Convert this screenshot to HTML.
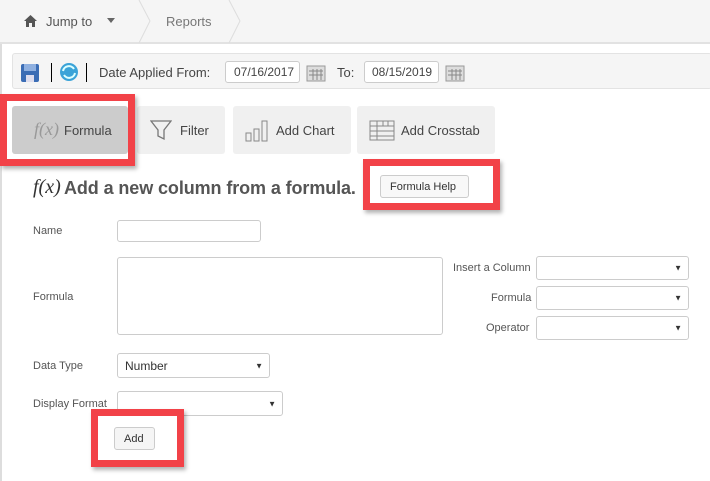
<!DOCTYPE html>
<html><head><style>
body{margin:0;width:710px;height:481px;background:#fff;font-family:"Liberation Sans",sans-serif;position:relative;overflow:hidden;color:#555}
.a{position:absolute}
.hdr{left:0;top:0;width:710px;height:42px;background:#f5f5f5;border-bottom:2px solid #e2e2e2}
.lbl{font-size:11px;color:#555}
.in{position:absolute;border:1px solid #ccc;border-radius:3px;background:#fff;box-sizing:border-box}
.sel::after{content:"▼";position:absolute;right:6px;top:50%;transform:translateY(-50%);font-size:8px;color:#333}
.btn{position:absolute;background:#f0f0f0;border-radius:3px;font-size:13px;color:#444;box-sizing:border-box}
.red{position:absolute;border:7px solid #f24248;box-sizing:border-box;box-shadow:2px 3px 4px rgba(0,0,0,.3)}
</style></head><body>
<div class="a" style="left:0;top:0;width:2px;height:481px;background:#ddd"></div>
<div class="a hdr"></div>
<svg class="a" style="left:24px;top:15px" width="13" height="12"><path d="M6.5 0 L13 6 H11 V12 H8 V8 H5 V12 H2 V6 H0 Z" fill="#555"/></svg>
<div class="a" style="left:46px;top:14px;font-size:13px;color:#555">Jump to</div>
<div class="a" style="left:107px;top:18px;width:0;height:0;border-left:4px solid transparent;border-right:4px solid transparent;border-top:5px solid #666"></div>
<svg class="a" style="left:138px;top:0" width="14" height="43"><path d="M1 0 L12 21 L1 43" fill="none" stroke="#ddd"/></svg>
<div class="a" style="left:166px;top:14px;font-size:13px;color:#777">Reports</div>
<svg class="a" style="left:228px;top:0" width="14" height="43"><path d="M1 0 L12 21 L1 43" fill="none" stroke="#ddd"/></svg>
<div class="a" style="left:12px;top:53px;width:700px;height:36px;background:#f5f5f5;border:1px solid #e3e3e3;box-sizing:border-box;border-radius:3px"></div>
<svg class="a" style="left:20px;top:63px" width="20" height="20"><rect x="1" y="1" width="18" height="18" rx="2" fill="#3b6db5"/><rect x="4" y="1" width="12" height="7" fill="#8fb0e0"/><rect x="6" y="12" width="8" height="7" fill="#dde"/></svg>
<div class="a" style="left:51px;top:63px;width:1px;height:19px;background:#000"></div>
<svg class="a" style="left:59px;top:62px" width="20" height="20"><circle cx="10" cy="10" r="9" fill="#3aa3d8"/><path d="M4 9 A6 6 0 0 1 15 7 M16 11 A6 6 0 0 1 5 13" stroke="#dff" stroke-width="2" fill="none"/></svg>
<div class="a" style="left:86px;top:63px;width:1px;height:19px;background:#000"></div>
<div class="a" style="left:99px;top:65px;font-size:13px;color:#444">Date Applied From:</div>
<div class="in" style="left:225px;top:61px;width:75px;height:22px;font-size:12px;padding:3px 0 0 8px;color:#444">07/16/2017</div>
<svg class="a" style="left:306px;top:63px" width="20" height="19"><rect x="1" y="3" width="18" height="15" fill="#ddd" stroke="#999"/><path d="M3 8h14M3 12h14M7 6v11M11 6v11M15 6v11" stroke="#888"/></svg>
<div class="a" style="left:337px;top:65px;font-size:13px;color:#444">To:</div>
<div class="in" style="left:364px;top:61px;width:75px;height:22px;font-size:12px;padding:3px 0 0 7px;color:#444">08/15/2019</div>
<svg class="a" style="left:445px;top:63px" width="20" height="19"><rect x="1" y="3" width="18" height="15" fill="#ddd" stroke="#999"/><path d="M3 8h14M3 12h14M7 6v11M11 6v11M15 6v11" stroke="#888"/></svg>

<div class="btn" style="left:12px;top:106px;width:116px;height:48px;background:#ccc"><span class="a" style="left:22px;top:13px;font-family:'Liberation Serif',serif;font-style:italic;font-size:18px;color:#999">f(x)</span><span class="a" style="left:52px;top:17px">Formula</span></div>
<div class="btn" style="left:137px;top:106px;width:88px;height:48px"><svg class="a" style="left:13px;top:13px" width="22" height="22"><path d="M1 2h20l-7 9v9l-6-3v-6z" fill="none" stroke="#777" stroke-width="1.3"/></svg><span class="a" style="left:43px;top:17px">Filter</span></div>
<div class="btn" style="left:233px;top:106px;width:118px;height:48px"><svg class="a" style="left:12px;top:13px" width="26" height="24"><rect x="1" y="14" width="5" height="8" fill="none" stroke="#888"/><rect x="9" y="10" width="5" height="12" fill="none" stroke="#888"/><rect x="17" y="2" width="5" height="20" fill="none" stroke="#888"/></svg><span class="a" style="left:43px;top:17px">Add Chart</span></div>
<div class="btn" style="left:357px;top:106px;width:138px;height:48px"><svg class="a" style="left:12px;top:14px" width="26" height="22"><rect x="1" y="1" width="24" height="19" fill="none" stroke="#888"/><path d="M1 6h24M1 11h24M1 16h24M8 1v19M14 1v5M19 1v5" stroke="#888"/></svg><span class="a" style="left:44px;top:17px">Add Crosstab</span></div>
<div class="red" style="left:0;top:94px;width:135px;height:72px"></div>

<div class="a" style="left:33px;top:176px;font-family:'Liberation Serif',serif;font-style:italic;font-size:20px;color:#333">f(x)</div>
<div class="a" style="left:64px;top:178px;font-size:18px;font-weight:bold;color:#555;letter-spacing:-0.1px">Add a new column from a formula.</div>
<div class="in" style="left:380px;top:175px;width:89px;height:23px;background:#f8f8f8;font-size:11px;padding:5px 0 0 9px;color:#333">Formula Help</div>
<div class="red" style="left:363px;top:159px;width:137px;height:51px"></div>

<div class="a lbl" style="left:33px;top:225px">Name</div>
<div class="in" style="left:117px;top:220px;width:144px;height:22px"></div>
<div class="a lbl" style="left:33px;top:291px">Formula</div>
<div class="in" style="left:117px;top:257px;width:326px;height:78px"></div>
<div class="a lbl" style="left:453px;top:262px">Insert a Column</div>
<div class="in sel" style="left:536px;top:256px;width:153px;height:24px"></div>
<div class="a lbl" style="left:491px;top:292px">Formula</div>
<div class="in sel" style="left:536px;top:286px;width:153px;height:24px"></div>
<div class="a lbl" style="left:486px;top:322px">Operator</div>
<div class="in sel" style="left:536px;top:316px;width:153px;height:24px"></div>
<div class="a lbl" style="left:33px;top:360px">Data Type</div>
<div class="in sel" style="left:117px;top:353px;width:153px;height:25px;font-size:12px;padding:5px 0 0 7px;color:#333">Number</div>
<div class="a lbl" style="left:33px;top:398px">Display Format</div>
<div class="in sel" style="left:117px;top:391px;width:166px;height:25px"></div>
<div class="in" style="left:114px;top:427px;width:41px;height:23px;background:#f5f5f5;font-size:11px;padding:5px 0 0 9px;color:#333">Add</div>
<div class="red" style="left:91px;top:409px;width:93px;height:58px"></div>
</body></html>
